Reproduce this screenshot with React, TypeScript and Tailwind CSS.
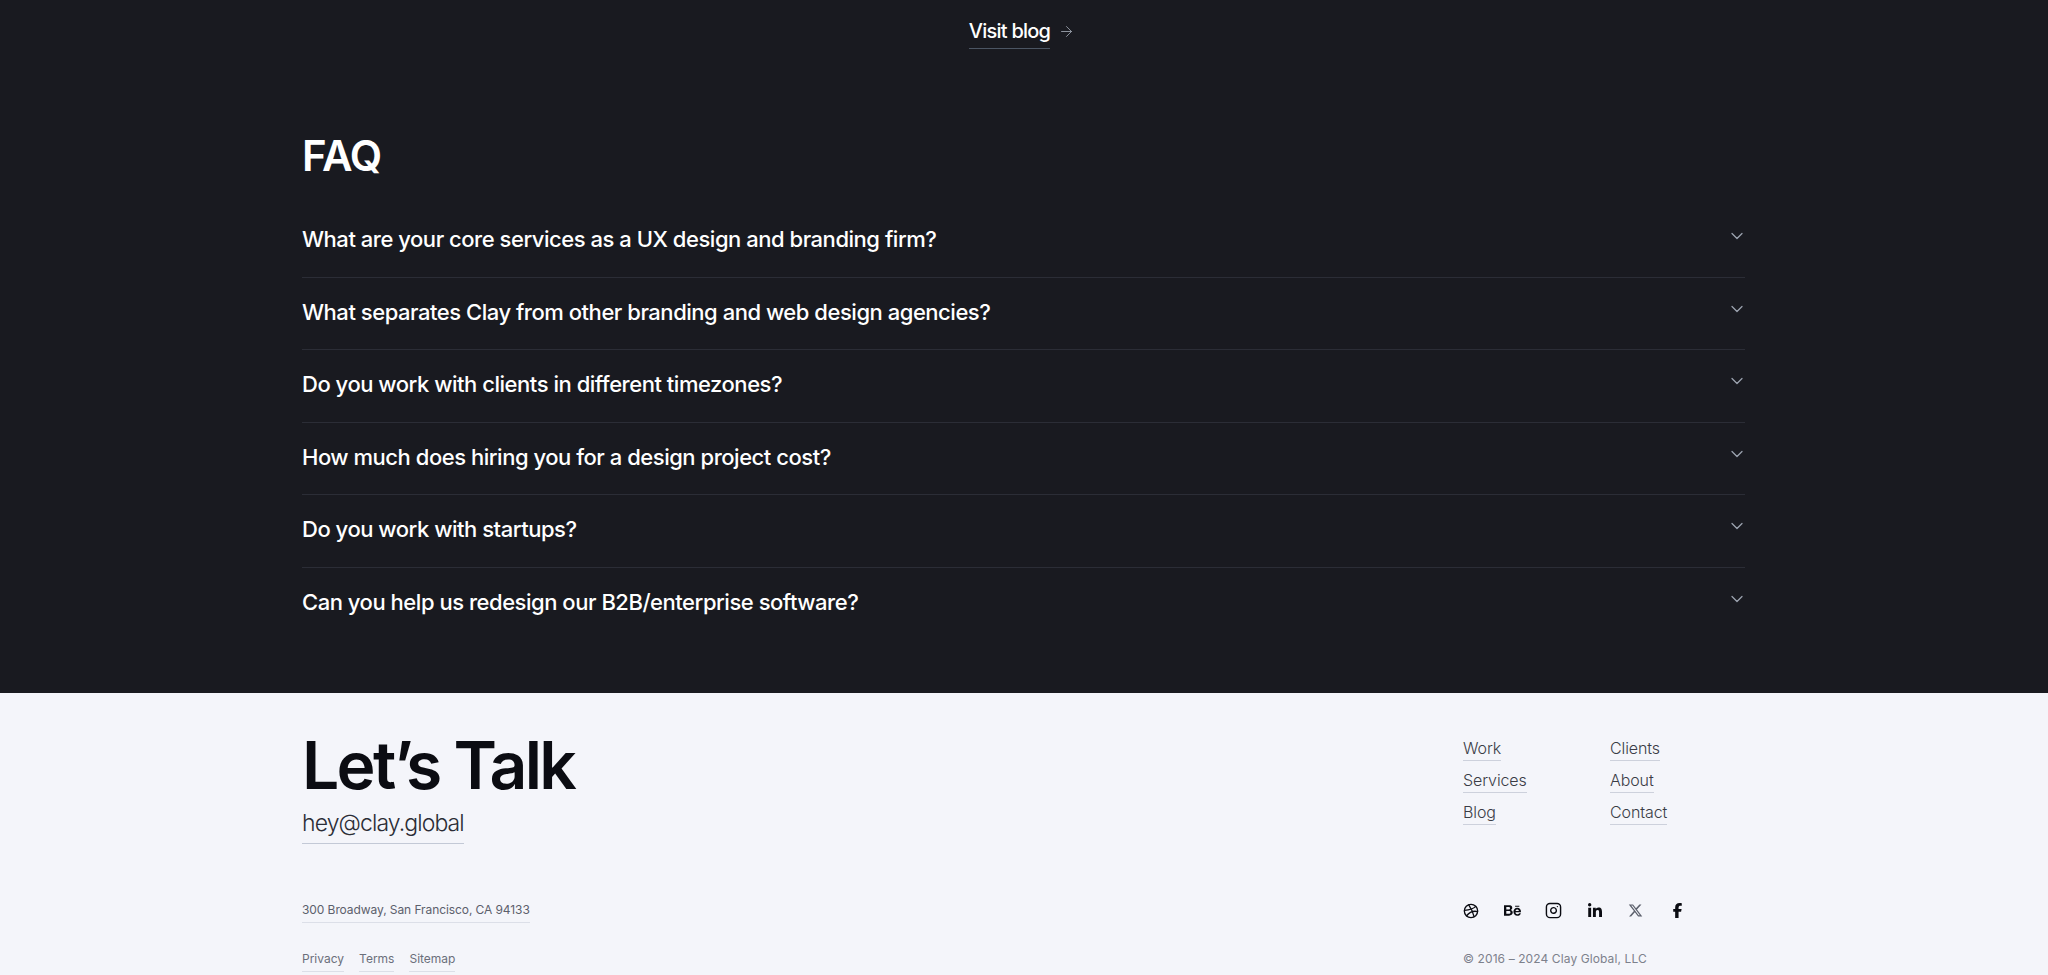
import { ArrowRight, ChevronDown, Dribbble, Instagram } from 'lucide-react';
import { FaBehance, FaFacebookF, FaLinkedinIn, FaXTwitter } from 'react-icons/fa6';

const FAQS = [
  'What are your core services as a UX design and branding firm?',
  'What separates Clay from other branding and web design agencies?',
  'Do you work with clients in different timezones?',
  'How much does hiring you for a design project cost?',
  'Do you work with startups?',
  'Can you help us redesign our B2B/enterprise software?',
];

const NAV = [
  ['Work', 'Clients'],
  ['Services', 'About'],
  ['Blog', 'Contact'],
];

export default function App() {
  return (
    <div className="h-[975px] overflow-hidden font-['Inter',sans-serif] antialiased">
      {/* Dark FAQ section */}
      <section className="h-[693px] bg-[#191a20] pl-[302px] pr-[303px]">
        <div className="flex justify-center pt-[18px] pr-[3px]">
          <a className="h-[31px] border-b border-[#4b5563] text-[20px] leading-[26px] font-medium tracking-[-0.75px] text-white">Visit blog</a>
          <ArrowRight className="ml-[8px] mt-[5px] h-[17px] w-[17px] text-[#9ca3af]" strokeWidth={1.25} />
        </div>

        <h2 className="mt-[83px] text-[42px] leading-[48px] font-semibold tracking-[-1px] text-white">FAQ</h2>

        <div className="mt-[25px]">
          {FAQS.map((q, i) => (
            <div key={q} className={`flex h-[72.6px] items-start justify-between pt-[19px] ${i < FAQS.length - 1 ? 'border-b border-[#2b2d36]' : ''}`}>
              <span className="text-[22px] leading-[30px] font-medium tracking-[-0.47px] text-white">{q}</span>
              <ChevronDown className="mr-[-2px] mt-[2px] h-[20px] w-[20px] text-[#9ca3af]" strokeWidth={1.5} />
            </div>
          ))}
        </div>
      </section>

      {/* Footer */}
      <footer className="flex h-[282px] justify-between bg-[#f4f5fa] pl-[302px] pr-[303px]">
        <div>
          <h2 className="mt-[36px] text-[66px] leading-[72px] font-semibold tracking-[-2.7px] text-[#0b0c12]">Let’s Talk</h2>
          <a className="mt-[6px] block h-[37px] w-fit border-b border-[#c3c9d6] text-[23px] leading-[32px] font-light tracking-[-0.9px] text-[#2b2d36]">hey@clay.global</a>
          <a className="mt-[57px] block h-[22px] w-fit border-b border-[#dcdfe8] text-[12px] leading-[18px] tracking-[-0.08px] text-[#5c606c]">300 Broadway, San Francisco, CA 94133</a>
          <div className="mt-[27px] flex gap-[15px] text-[12px] leading-[18px] text-[#6b6f7b]">
            <a className="h-[22px] border-b border-[#dcdfe8]">Privacy</a>
            <a className="h-[22px] border-b border-[#dcdfe8]">Terms</a>
            <a className="h-[22px] border-b border-[#dcdfe8]">Sitemap</a>
          </div>
        </div>

        <div className="w-[282px]">
          <div className="mt-[46px] grid grid-cols-[147px_1fr] gap-y-[10px]">
            {NAV.flat().map((label) => (
              <a key={label} className="block h-[22px] w-fit border-b border-[#cdd1dc] text-[16px] leading-[18px] font-light tracking-[-0.1px] text-[#3a3c46]">{label}</a>
            ))}
          </div>
          <div className="mt-[77px] flex items-center text-[#0b0c12]">
            <Dribbble className="h-[16px] w-[16px]" strokeWidth={2} />
            <FaBehance className="ml-[25px] h-[17px] w-[17px]" />
            <Instagram className="ml-[24px] h-[17px] w-[17px]" strokeWidth={2} />
            <FaLinkedinIn className="ml-[25px] h-[16px] w-[16px]" />
            <FaXTwitter className="ml-[25px] h-[15px] w-[15px] text-[#5c606c]" />
            <FaFacebookF className="ml-[27px] h-[15px] w-[15px]" />
          </div>
          <p className="mt-[31px] text-[12px] leading-[18px] tracking-[0.1px] text-[#7d818c]">© 2016 – 2024 Clay Global, LLC</p>
        </div>
      </footer>
    </div>
  );
}
